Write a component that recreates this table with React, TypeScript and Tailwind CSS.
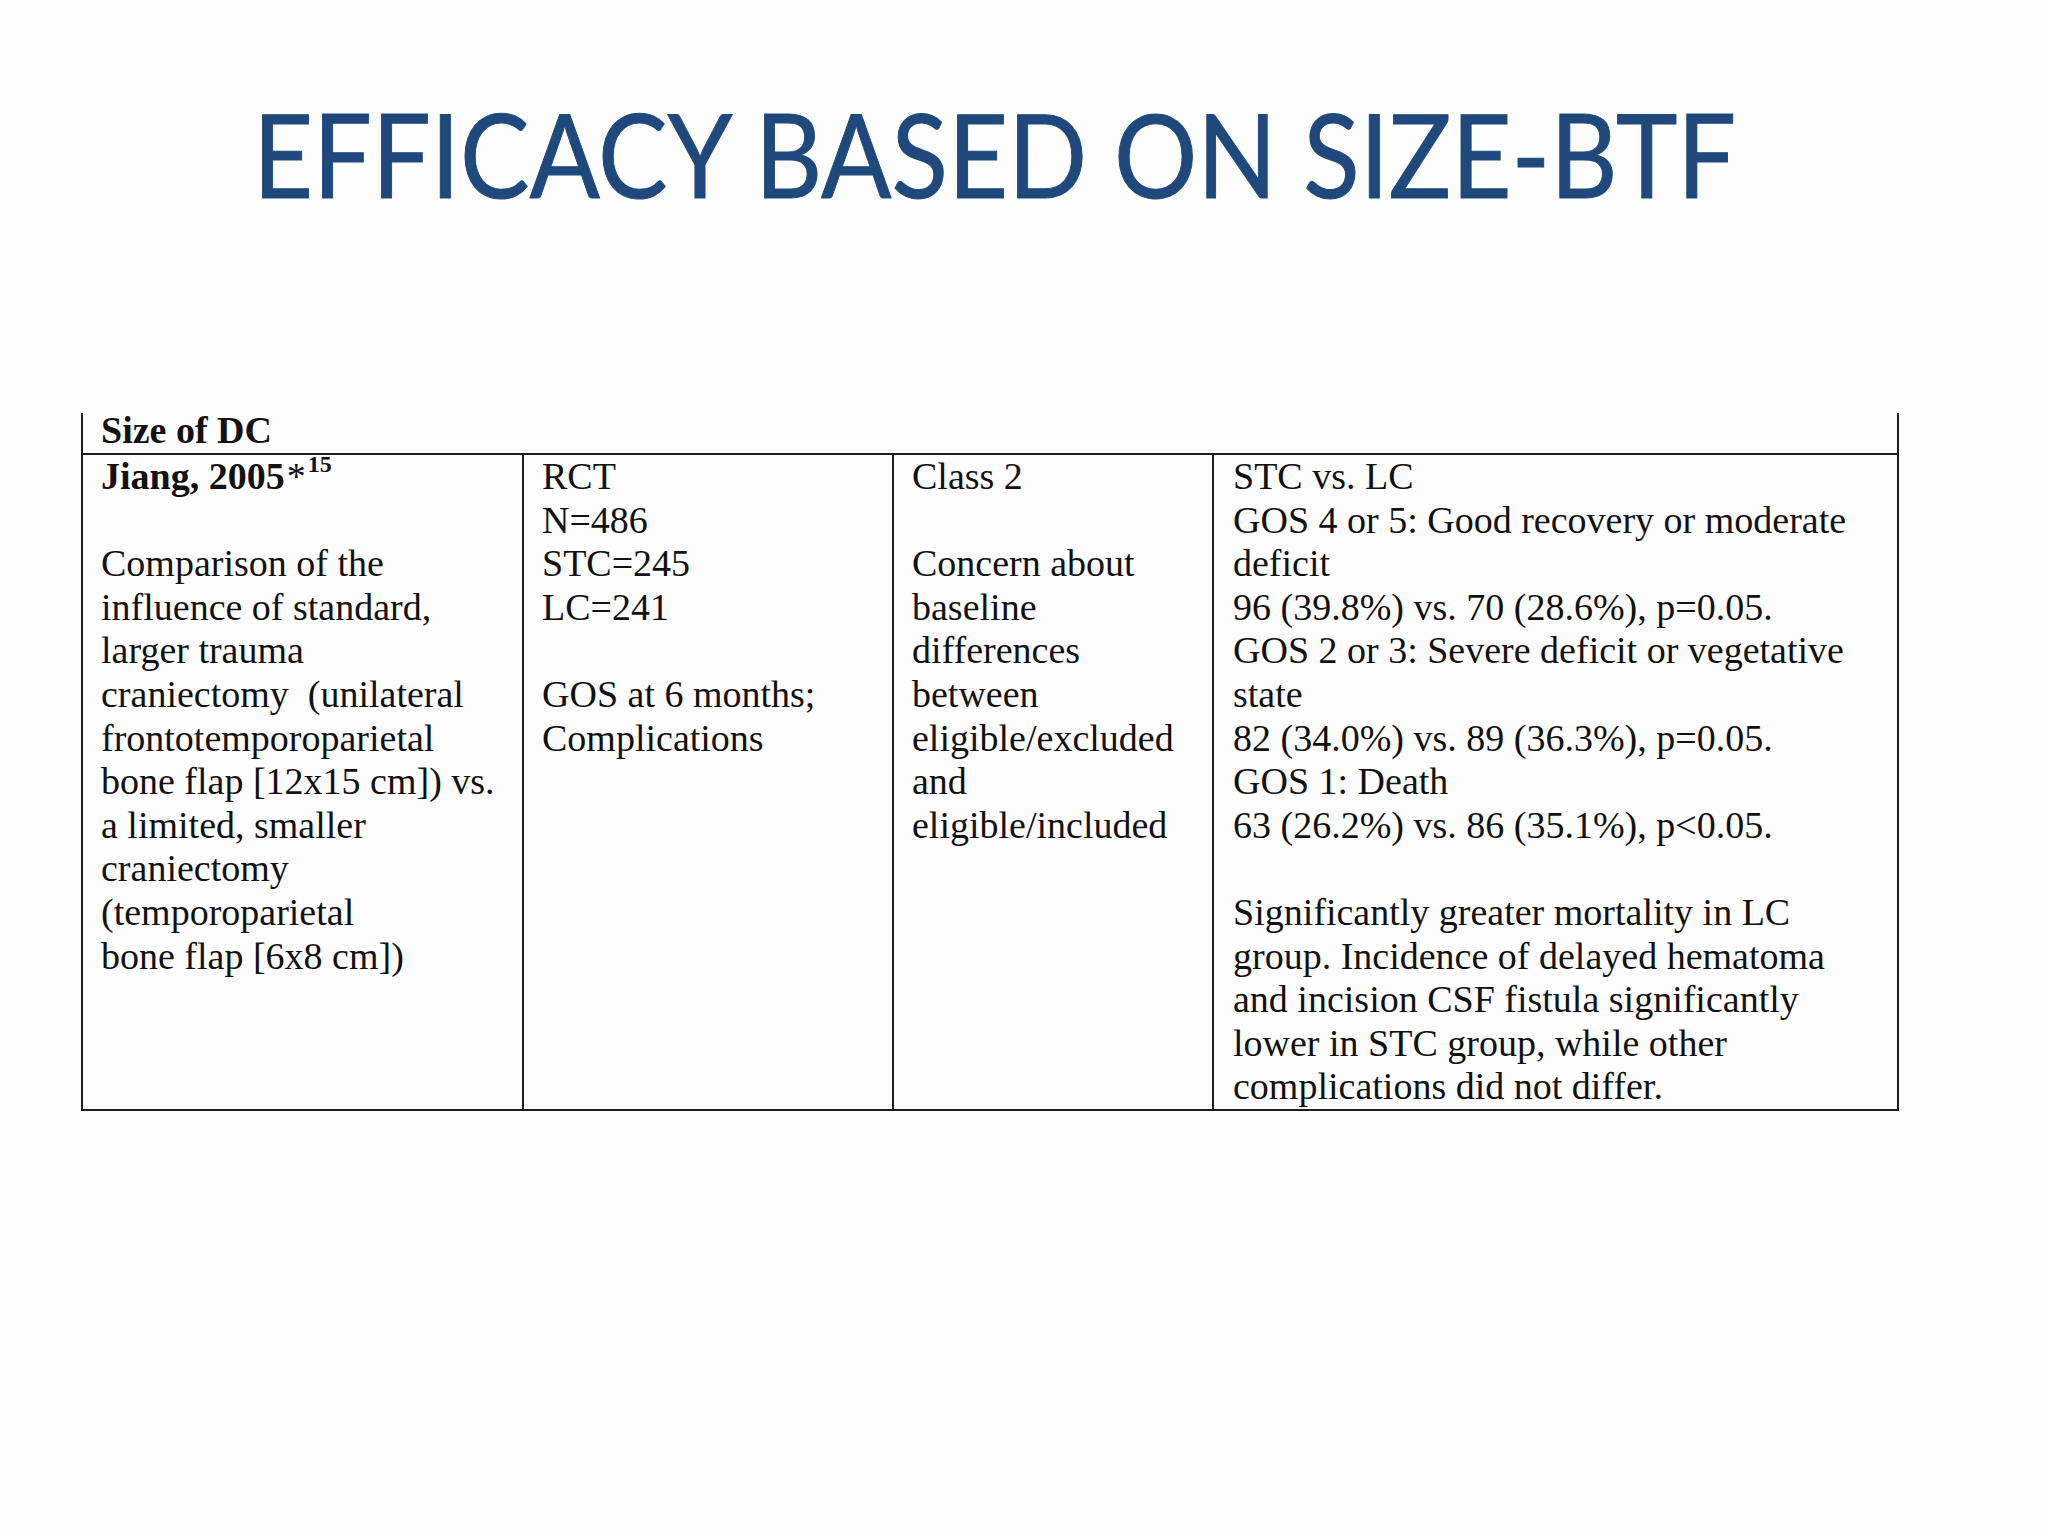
const col2 = ['RCT', 'N=486', 'STC=245', 'LC=241', '', 'GOS at 6 months;', 'Complications'];

const col3 = [
    'Class 2',
    '',
    'Concern about',
    'baseline',
    'differences',
    'between',
    'eligible/excluded',
    'and',
    'eligible/included',
];

const col4 = [
    'STC vs. LC',
    'GOS 4 or 5: Good recovery or moderate',
    'deficit',
    '96 (39.8%) vs. 70 (28.6%), p=0.05.',
    'GOS 2 or 3: Severe deficit or vegetative',
    'state',
    '82 (34.0%) vs. 89 (36.3%), p=0.05.',
    'GOS 1: Death',
    '63 (26.2%) vs. 86 (35.1%), p<0.05.',
    '',
    'Significantly greater mortality in LC',
    'group. Incidence of delayed hematoma',
    'and incision CSF fistula significantly',
    'lower in STC group, while other',
    'complications did not differ.',
];

const col1 = [
    'Comparison of the',
    'influence of standard,',
    'larger trauma',
    'craniectomy\u00a0 (unilateral',
    'frontotemporoparietal',
    'bone flap [12x15 cm]) vs.',
    'a limited, smaller',
    'craniectomy',
    '(temporoparietal',
    'bone flap [6x8 cm])',
];

function Lines({ lines }: { lines: string[] }) {
    return (
        <>
            {lines.map((l, i) => (
                <div key={i} className="whitespace-pre">
                    {l === '' ? '\u00a0' : l}
                </div>
            ))}
        </>
    );
}

export default function App() {
    return (
        <div className="w-[2048px] h-[1536px] bg-[#fdfdfe] overflow-hidden">
            {/* Slide title (Lato narrowed to Calibri proportions) */}
            <div className="pt-[96px] pl-[253px]">
                <h1 className="origin-left scale-x-[0.897] text-[116px] leading-none text-[#1f497d] font-normal whitespace-nowrap [font-family:Lato,'Open_Sans',sans-serif] [-webkit-text-stroke:1px_#1f497d]">
                    EFFICACY BASED ON SIZE-BTF
                </h1>
            </div>

            {/* Evidence table */}
            <div className="mt-[201px] ml-[81px] w-[1818px] text-[38px] text-[#111] [font-family:'Liberation_Serif','Times_New_Roman',serif]">
                <div className="h-[40px] border-l-2 border-r-2 border-[#1c1c1c] pl-[18px]">
                    <div className="font-bold leading-[34px]">Size of DC</div>
                </div>
                <div className="flex border-2 border-[#1c1c1c] leading-[43.6px]">
                    <div className="w-[439px] pl-[18px]">
                        <div className="whitespace-nowrap">
                            <span className="font-bold">Jiang, 2005</span>
                            <span className="ml-[2px]">*</span>
                            <sup className="font-bold text-[24px] relative -top-[17px] ml-[2px]">15</sup>
                        </div>
                        <div>{'\u00a0'}</div>
                        <Lines lines={col1} />
                    </div>
                    <div className="w-[370px] border-l-2 border-[#1c1c1c] pl-[18px]">
                        <Lines lines={col2} />
                    </div>
                    <div className="w-[320px] border-l-2 border-[#1c1c1c] pl-[18px]">
                        <Lines lines={col3} />
                    </div>
                    <div className="flex-1 border-l-2 border-[#1c1c1c] pl-[19px]">
                        <Lines lines={col4} />
                    </div>
                </div>
            </div>
        </div>
    );
}
